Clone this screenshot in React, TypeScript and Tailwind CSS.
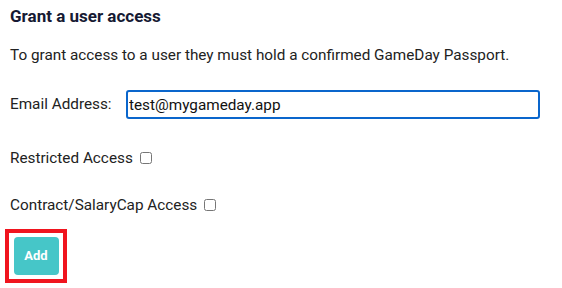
import { useState } from "react";

const App = () => {
  const [email, setEmail] = useState("test@mygameday.app");
  const [restricted, setRestricted] = useState(false);
  const [contract, setContract] = useState(false);

  return (
    <div className="w-[562px] h-[288px] bg-white text-[#222222] font-['Roboto',sans-serif] px-[10px] pt-[4px]">
      <h2 className="text-[17px] leading-[24px] font-bold text-[#161a33]">Grant a user access</h2>
      <p className="mt-[18px] text-[15.3px] leading-[18px]">
        To grant access to a user they must hold a confirmed GameDay Passport.
      </p>

      <div className="mt-[26px] flex items-center h-[29px]">
        <label className="text-[15.3px] w-[116px]">Email Address:</label>
        <input
          type="email"
          value={email}
          onChange={(e) => setEmail(e.target.value)}
          className="w-[414px] h-[29px] border-2 border-[#0a66cc] rounded-[3px] px-[1px] text-[15.3px] text-[#111] outline-none"
        />
      </div>

      <div className="mt-[27px] flex items-center gap-[7px] h-[24px]">
        <span className="text-[15.3px]">Restricted Access</span>
        <input
          type="checkbox"
          checked={restricted}
          onChange={(e) => setRestricted(e.target.checked)}
          className="w-[12px] h-[12px] m-0"
        />
      </div>

      <div className="mt-[23px] flex items-center gap-[7px] h-[24px]">
        <span className="text-[15.3px]">Contract/SalaryCap Access</span>
        <input
          type="checkbox"
          checked={contract}
          onChange={(e) => setContract(e.target.checked)}
          className="w-[12px] h-[12px] m-0"
        />
      </div>

      <div className="mt-[12px] ml-[-5px] w-[62px] h-[54px] border-[4px] border-[#f0141e] flex items-center justify-center">
        <button className="w-[45px] h-[38px] bg-[#46c6c8] rounded-[4px] text-white text-[13px] font-bold">
          Add
        </button>
      </div>
    </div>
  );
};

export default App;
